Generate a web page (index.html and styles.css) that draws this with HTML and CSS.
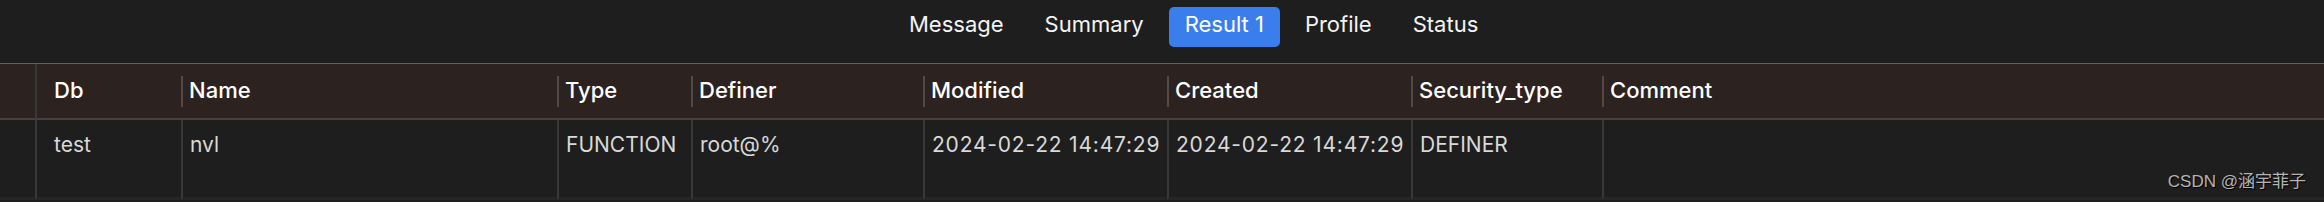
FILE: index.html
```html
<!DOCTYPE html>
<html>
  <head>
    <meta charset="utf-8">
    <title>Result 1</title>
    <link rel="stylesheet" href="styles.css">
  </head>
  <body>
    <div class="tabbar">
      <button class="tab">Message</button>
      <button class="tab">Summary</button>
      <button class="tab active">Result 1</button>
      <button class="tab">Profile</button>
      <button class="tab">Status</button>
    </div>
    <div class="grid">
      <div class="head rownum"></div>
      <div class="head first">Db</div>
      <div class="head">Name</div>
      <div class="head">Type</div>
      <div class="head">Definer</div>
      <div class="head">Modified</div>
      <div class="head">Created</div>
      <div class="head">Security_type</div>
      <div class="head">Comment</div>

      <div class="cell rownum"></div>
      <div class="cell first">test</div>
      <div class="cell">nvl</div>
      <div class="cell">FUNCTION</div>
      <div class="cell">root@%</div>
      <div class="cell date">2024-02-22 14:47:29</div>
      <div class="cell date">2024-02-22 14:47:29</div>
      <div class="cell">DEFINER</div>
      <div class="cell"></div>
    </div>
    <div class="watermark">CSDN @涵宇菲子</div>
  </body>
</html>
```

FILE: styles.css
```css
:root {
  --bg-color: #1e1e1e;
  --head-color: #2c2220;
  --head-line: #4a3f3b;
  --cell-line: #383838;
  --accent: #3a7eee;
}

*, *:before, *:after {
  box-sizing: border-box;
}

html, body {
  margin: 0;
  padding: 0;
  height: 100%;
  background: var(--bg-color);
}

body {
  position: relative;
  overflow: hidden;
  font-family: Inter, "Noto Sans", sans-serif;
  color: #fff;
}

/*----- TABS -----*/

.tabbar {
  height: 63px;
  display: flex;
  gap: 9px;
  padding: 7px 0 0 893px;
}

.tab {
  height: 40px;
  padding: 0 16px 6px;
  border: none;
  border-radius: 5px;
  background: none;
  color: #f4f4f4;
  font-family: inherit;
  font-size: 22px;
  line-height: 34px;
}

.tab.active {
  background: var(--accent);
  color: #fff;
}

/*----- GRID -----*/

.grid {
  display: grid;
  grid-template-columns: 37px 144px 376px 134px 232px 244px 244px 191px 1fr;
  grid-template-rows: 56px 80px;
  border-top: 1px solid #5e5e5e;
}

.head {
  position: relative;
  background: var(--head-color);
  border-bottom: 2px solid var(--head-line);
  padding: 0 8px 2px 8px;
  display: flex;
  align-items: center;
  font-size: 22px;
  font-weight: 500;
  color: #fff;
  white-space: nowrap;
}

.head:before {
  content: "";
  position: absolute;
  left: 0;
  top: 12px;
  bottom: 11px;
  width: 2px;
  background: #544945;
}

.head.rownum:before,
.head.first:before {
  display: none;
}

.rownum {
  border-right: 2px solid var(--cell-line);
}

.head.first,
.cell.first {
  padding-left: 17px;
}

.cell {
  padding: 11px 8px 0 7px;
  border-left: 2px solid var(--cell-line);
  border-bottom: 3px solid #262626;
  font-size: 21px;
  line-height: 28px;
  color: #d9d9d9;
  white-space: nowrap;
}

.cell.date {
  letter-spacing: 0.8px;
}

.cell.rownum,
.cell.first {
  border-left: none;
}

.watermark {
  position: absolute;
  right: 18px;
  bottom: 10px;
  font-family: "Liberation Sans", "Noto Sans CJK SC", sans-serif;
  font-size: 17px;
  color: #b4b4b4;
  text-shadow: 1px 1px 1px #000;
}
```
